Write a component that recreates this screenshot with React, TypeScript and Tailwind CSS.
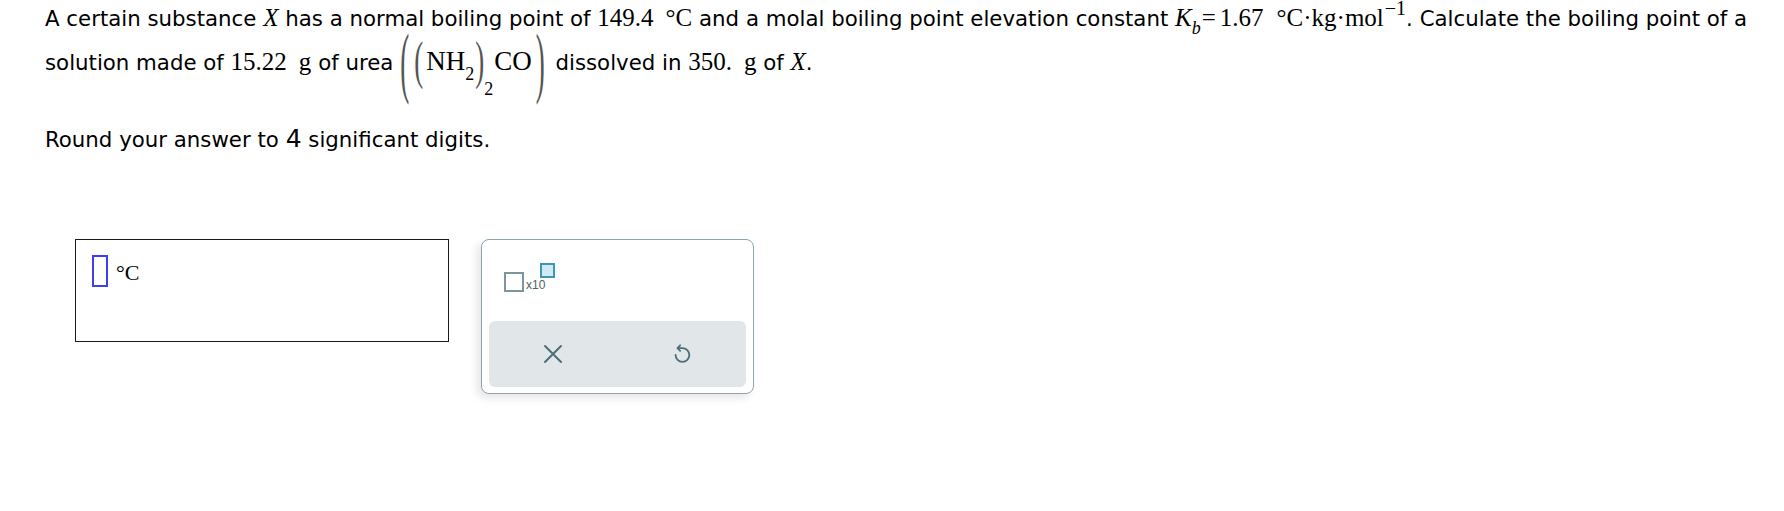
import React from 'react';

const serif = "font-['Liberation_Serif',serif]";

function Sub({ children, drop = 8 }: { children: React.ReactNode; drop?: number }) {
  return (
    <span
      className="relative inline-block text-[18px] leading-none"
      style={{ top: drop }}
    >
      {children}
    </span>
  );
}

function Paren({ ch, scale, shift, cls = '' }: { ch: string; scale: number; shift: number; cls?: string }) {
  return (
    <span
      className={`inline-block leading-none text-[#555] origin-center ${cls}`}
      style={{ transform: `translateY(${shift}px) scaleY(${scale})` }}
    >
      {ch}
    </span>
  );
}

function UndoIcon() {
  return (
    <svg width="22" height="22" viewBox="0 0 24 24" fill="none" stroke="#4f6d7a" strokeWidth="2" strokeLinecap="round" strokeLinejoin="round">
      <path d="M5 13 A7.5 7.5 0 1 0 12.5 5.5 L7.5 5.5" />
      <path d="M10 2.5 L7 5.5 L10 8.5" />
    </svg>
  );
}

function CloseIcon() {
  return (
    <svg width="20" height="20" viewBox="0 0 20 20" fill="none" stroke="#4f6d7a" strokeWidth="2" strokeLinecap="round">
      <path d="M2 2 L18 18 M18 2 L2 18" />
    </svg>
  );
}

export default function App() {
  return (
    <div className="min-h-[511px] bg-white pl-[45px] pr-[20px] text-black font-['DejaVu_Sans',sans-serif] text-[21.3px]">
      {/* Question */}
      <p className="leading-[44px] -mt-[3px]">
        A certain substance <span className={`${serif} italic text-[25px] leading-none`}>X</span> has a normal boiling point of{' '}
        <span className={`${serif} text-[25px] leading-none`}>
          149.4<span className="ml-[12px]">°C</span>
        </span>{' '}
        and a molal boiling point elevation constant{' '}
        <span className={`${serif} text-[25px] leading-none`}>
          <i>K</i>
          <Sub drop={8}>
            <i>b</i>
          </Sub>
          <span className="ml-[1px] mr-[4px]">=</span>1.67
          <span className="ml-[13px]">°C</span>·kg·mol
          <span className="relative -top-[11px] inline-block text-[20px] leading-none ml-[1px]">−1</span>
        </span>
        . Calculate the boiling point of a solution made of{' '}
        <span className={`${serif} text-[25px] leading-none`}>
          15.22<span className="ml-[12px]">g</span>
        </span>{' '}
        of urea{' '}
        <span className={`${serif} text-[27px] leading-none`}>
          <Paren ch="(" scale={2.9} shift={2} cls="mr-[5px]" />
          <Paren ch="(" scale={1.95} shift={0} cls="mr-[3px]" />
          NH
          <Sub drop={10}>2</Sub>
          <Paren ch=")" scale={1.95} shift={0} cls="ml-[1px]" />
          <Sub drop={25}>2</Sub>
          <span className="ml-[1px]">CO</span>
          <Paren ch=")" scale={2.9} shift={2} cls="ml-[4px] mr-[4px]" />
        </span>{' '}
        dissolved in{' '}
        <span className={`${serif} text-[25px] leading-none`}>
          350.<span className="ml-[12px]">g</span>
        </span>{' '}
        of <span className={`${serif} italic text-[25px] leading-none`}>X</span>.
      </p>

      <p className="leading-[41px] mt-[34px]">
        Round your answer to <span className="text-[25px] leading-none">4</span> significant digits.
      </p>

      {/* Answer area */}
      <div className="mt-[79px] ml-[30px] flex items-start gap-[32px]">
        <div className="w-[374px] h-[103px] border border-[#1a1a1a] pl-[16px] pt-[15px] flex items-start">
          <span className="w-[16px] h-[32px] border-2 border-[#3d3df2] shrink-0" />
          <span className={`${serif} text-[22px] leading-none ml-[8px] mt-[7px]`}>°C</span>
        </div>

        <div className="w-[273px] h-[155px] rounded-[8px] border border-[#8fa3ad] bg-white shadow-[-4px_4px_8px_rgba(0,0,0,0.10)] px-[7px] pb-[6px] flex flex-col">
          <div className="h-[81px] pl-[15px] pt-[23px] flex items-start">
            <div className="mt-[9px] w-[20px] h-[20px] border-2 border-[#7f959c] bg-white" />
            <span className="mt-[16px] ml-[2px] text-[12px] leading-none text-[#4d5f66] font-['Liberation_Sans',sans-serif]">x10</span>
            <div className="-ml-[5px] w-[15px] h-[15px] border-2 border-[#3f97b3] bg-[#cfeaf2]" />
          </div>
          <div className="flex-1 rounded-[6px] bg-[#e1e6e9] flex">
            <button className="flex-1 flex items-center justify-center">
              <CloseIcon />
            </button>
            <button className="flex-1 flex items-center justify-center">
              <UndoIcon />
            </button>
          </div>
        </div>
      </div>
    </div>
  );
}
